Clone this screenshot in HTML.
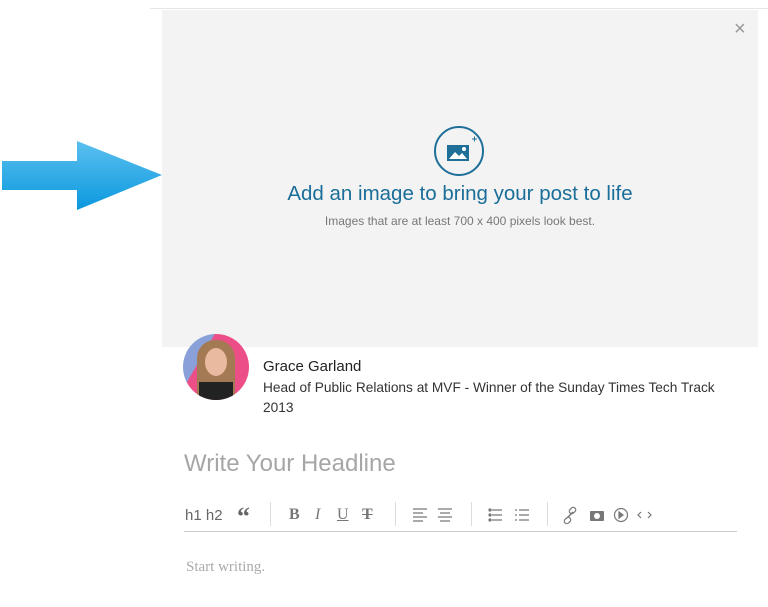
<!DOCTYPE html>
<html><head><style>
body{margin:0;width:768px;height:607px;background:#fff;position:relative;overflow:hidden;font-family:"Liberation Sans",Arial,sans-serif}
.abs{position:absolute}
</style></head><body>
<div class="abs" style="left:150px;top:8px;width:618px;height:1px;background:#e6e6e6"></div>
<div class="abs" style="left:162px;top:10px;width:596px;height:337px;background:#f3f3f3"></div>
<div class="abs" style="left:734px;top:19px;font-size:20px;color:#999;line-height:20px">×</div>
<svg class="abs" style="left:0;top:138px" width="170" height="76">
<defs><linearGradient id="g" x1="0" y1="0" x2="0" y2="1"><stop offset="0" stop-color="#5cc0ef"/><stop offset="1" stop-color="#0a98de"/></linearGradient></defs>
<polygon points="2,23 77,23 77,3 162,37 77,72 77,52 2,52" fill="url(#g)"/>
</svg>
<svg class="abs" style="left:432px;top:126px" width="56" height="52">
<circle cx="27" cy="25" r="24" fill="none" stroke="#1f6f99" stroke-width="2"/>
<rect x="15" y="19" width="22" height="16" fill="#1f6f99"/>
<path d="M17 33 L23 26 L27 30 L30 27 L35 33Z" fill="#fff"/>
<circle cx="32" cy="23" r="2" fill="#fff"/>
<path d="M40 13h5M42.5 10.5v5" stroke="#1f6f99" stroke-width="1"/>
</svg>
<div class="abs" style="left:162px;top:182px;width:596px;text-align:center;font-size:20.5px;color:#1a6e99">Add an image to bring your post to life</div>
<div class="abs" style="left:162px;top:214px;width:596px;text-align:center;font-size:12px;color:#777">Images that are at least 700 x 400 pixels look best.</div>
<div class="abs" style="left:183px;top:334px;width:66px;height:66px;border-radius:50%;overflow:hidden;background:linear-gradient(120deg,#8aa0d8 0%,#8aa0d8 30%,#ec4f88 31%,#ec4f88 100%)">
<div class="abs" style="left:14px;top:6px;width:38px;height:60px;border-radius:18px 18px 6px 6px;background:#a47a55"></div>
<div class="abs" style="left:22px;top:14px;width:22px;height:28px;border-radius:50%;background:#e9b9a0"></div>
<div class="abs" style="left:16px;top:48px;width:34px;height:20px;background:#222"></div>
</div>
<div class="abs" style="left:263px;top:358px;font-size:15px;color:#222">Grace Garland</div>
<div class="abs" style="left:263px;top:378px;width:470px;font-size:13.7px;line-height:20px;color:#333">Head of Public Relations at MVF - Winner of the Sunday Times Tech Track 2013</div>
<div class="abs" style="left:184px;top:450px;font-size:24px;color:#a6a6a6">Write Your Headline</div>
<div class="abs" style="left:185px;top:507px;font-size:15px;color:#666;white-space:nowrap">h1&nbsp;h2</div>
<div class="abs" style="left:237px;top:502px;font-family:'Liberation Serif',serif;font-weight:bold;font-size:26px;color:#666">“</div>
<div class="abs" style="left:270px;top:502px;width:1px;height:24px;background:#ddd"></div>
<div class="abs" style="left:289px;top:506px;font-family:'Liberation Serif',serif;font-size:16px;color:#777"><b>B</b></div>
<div class="abs" style="left:315px;top:506px;font-family:'Liberation Serif',serif;font-size:16px;color:#777"><i>I</i></div>
<div class="abs" style="left:337px;top:506px;font-family:'Liberation Serif',serif;font-size:16px;color:#777"><u>U</u></div>
<div class="abs" style="left:362px;top:506px;font-family:'Liberation Serif',serif;font-size:16px;color:#777"><b><s>T</s></b></div>
<div class="abs" style="left:395px;top:502px;width:1px;height:24px;background:#ddd"></div>
<svg class="abs" style="left:410px;top:505px" width="250" height="20" stroke="#777" stroke-width="1.2" fill="none">
<path d="M3 4h14M3 8h10M3 12h14M3 16h10M28 4h14M30 8h10M28 12h14M30 16h10"/>
<path d="M82 5h10M82 10h10M82 15h10"/><circle cx="80" cy="5" r="1" fill="#777"/><circle cx="80" cy="10" r="1" fill="#777"/><circle cx="80" cy="15" r="1" fill="#777"/>
<path d="M109 5h10M109 10h10M109 15h10M105 5h2M105 10h2M105 15h2"/>
<path d="M157 13l6-6" stroke-width="1.5"/><rect x="155" y="12" width="5" height="7" rx="2.5" transform="rotate(45 157.5 15.5)"/><rect x="160" y="2" width="5" height="7" rx="2.5" transform="rotate(45 162.5 5.5)"/>
<rect x="180" y="6" width="14" height="10" rx="1" fill="#777" stroke="none"/><circle cx="187" cy="11" r="3" fill="#fff" stroke="none"/>
<circle cx="211" cy="10" r="6.5"/><path d="M209 7v6l4-3z" fill="#777"/>
<path d="M231 7l-3 3 3 3M238 7l3 3-3 3"/>
</svg>
<div class="abs" style="left:471px;top:502px;width:1px;height:24px;background:#ddd"></div>
<div class="abs" style="left:547px;top:502px;width:1px;height:24px;background:#ddd"></div>
<div class="abs" style="left:184px;top:531px;width:553px;height:1px;background:#ccc"></div>
<div class="abs" style="left:186px;top:559px;font-family:'Liberation Serif',serif;font-size:15px;color:#aaa">Start writing.</div>
</body></html>
